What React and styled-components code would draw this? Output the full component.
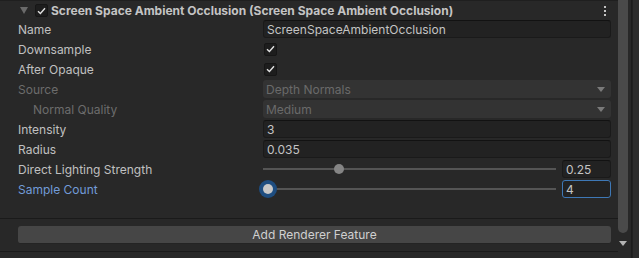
import React from 'react';
import styled, { createGlobalStyle } from 'styled-components';

const Global = createGlobalStyle`
  html, body {
    margin: 0;
    padding: 0;
    background: #282828;
    overflow: hidden;
  }
  body {
    font-family: Inter, "Noto Sans", sans-serif;
    font-size: 12px;
    color: #c4c4c4;
  }
`;

const Window = styled.div`
  display: flex;
  width: 639px;
  height: 258px;
  overflow: hidden;
`;

const Inspector = styled.div`
  width: 618px;
  display: flex;
  flex-direction: column;
  background: #282828;
  & > * {
    flex-shrink: 0;
  }
`;

const Header = styled.div`
  height: 20px;
  display: flex;
  align-items: center;
  padding-left: 20px;
  padding-right: 12px;
  border-top: 1px solid #1f1f1f;
  box-sizing: border-box;
`;

const Foldout = styled.div`
  width: 0;
  height: 0;
  border-left: 4px solid transparent;
  border-right: 4px solid transparent;
  border-top: 7px solid #6a6a6a;
  margin-right: 7px;
`;

const Title = styled.div`
  font-weight: 700;
  color: #c4c4c4;
  margin-left: 3px;
  flex: 1;
`;

const Kebab = styled.div`
  display: flex;
  flex-direction: column;
  gap: 2px;
  span {
    width: 2px;
    height: 2px;
    background: #c4c4c4;
  }
`;

const Rows = styled.div`
  display: flex;
  flex-direction: column;
  gap: 2px;
  padding: 0 7px 0 18px;
`;

const Row = styled.div`
  height: 18px;
  display: grid;
  grid-template-columns: 245px 1fr;
  align-items: center;
`;

const Label = styled.div`
  padding-left: ${p => (p.indent ? 15 : 0)}px;
  color: ${p => (p.disabled ? '#6c6c6c' : p.focused ? '#729bd8' : '#c0c0c0')};
  white-space: nowrap;
`;

const Field = styled.div`
  height: 18px;
  box-sizing: border-box;
  background: #222222;
  border: 1px solid ${p => (p.focused ? '#3e78b6' : '#1a1a1a')};
  border-top-color: ${p => (p.focused ? '#3e78b6' : '#121212')};
  border-radius: 3px;
  padding-left: 3px;
  display: flex;
  align-items: center;
  color: #c4c4c4;
`;

const Dropdown = styled.div`
  height: 18px;
  box-sizing: border-box;
  background: #333333;
  border-radius: 3px;
  padding: 0 6px 0 3px;
  display: flex;
  align-items: center;
  justify-content: space-between;
  color: #6a6a6a;
`;

const Arrow = styled.div`
  width: 0;
  height: 0;
  border-left: 4px solid transparent;
  border-right: 4px solid transparent;
  border-top: 5px solid #7a7a7a;
`;

const Check = styled.div`
  width: 13px;
  height: 13px;
  box-sizing: border-box;
  background: #1d1d1d;
  border: 1px solid #161616;
  border-radius: 2px;
  display: flex;
  align-items: center;
  justify-content: center;
  margin-left: ${p => p.offset || 0}px;
`;

const Slider = styled.div`
  display: grid;
  grid-template-columns: 1fr 49px;
  gap: 6px;
  align-items: center;
`;

const Track = styled.div`
  position: relative;
  height: 18px;
  display: flex;
  align-items: center;
  &::before {
    content: '';
    flex: 1;
    height: 2px;
    background: #555555;
  }
`;

const Thumb = styled.div`
  position: absolute;
  top: 50%;
  width: 10px;
  height: 10px;
  border-radius: 50%;
  background: ${p => (p.active ? '#c8c8c8' : '#858585')};
  transform: translate(-50%, -50%);
  box-shadow: ${p => (p.active ? '0 0 0 4px #1e4d80' : 'none')};
`;

const Footer = styled.div`
  margin-top: 20px;
  border-top: 1px solid #1a1a1a;
  border-bottom: 1px solid #1a1a1a;
  padding: 7px 7px 7px 18px;
`;

const Button = styled.div`
  height: 17px;
  background: #464646;
  border-radius: 3px;
  border-bottom: 1px solid #242424;
  display: flex;
  align-items: center;
  justify-content: center;
  color: #d0d0d0;
`;

const Below = styled.div`
  padding: 4px 0 0 8px;
  color: #9a9a9a;
`;

const ScrollTrack = styled.div`
  width: 13px;
  background: #282828;
  display: flex;
  flex-direction: column;
  align-items: flex-start;
  border-right: 1px solid #1c1c1c;
`;

const ScrollThumb = styled.div`
  width: 10px;
  height: 233px;
  flex-shrink: 0;
  background: #4a4a4a;
  border-radius: 0 0 5px 5px;
`;

const ScrollArrow = styled.div`
  margin: 8px 0 0 1px;
  width: 0;
  height: 0;
  border-left: 4px solid transparent;
  border-right: 4px solid transparent;
  border-top: 5px solid #b4b4b4;
`;

const Side = styled.div`
  flex: 1;
  background: #2c2c2c;
  border-left: 1px solid #202020;
`;

const Tick = () => (
  <svg width="9" height="8" viewBox="0 0 9 8">
    <path d="M1 4.2 L3.4 6.5 L8 1.2" fill="none" stroke="#e0e0e0" strokeWidth="1.4" />
  </svg>
);

export default function App() {
  return (
    <Window>
      <Global />
      <Inspector>
        <Header>
          <Foldout />
          <Check><Tick /></Check>
          <Title>Screen Space Ambient Occlusion (Screen Space Ambient Occlusion)</Title>
          <Kebab><span /><span /><span /></Kebab>
        </Header>
        <Rows>
          <Row>
            <Label>Name</Label>
            <Field>ScreenSpaceAmbientOcclusion</Field>
          </Row>
          <Row>
            <Label>Downsample</Label>
            <Check offset={1}><Tick /></Check>
          </Row>
          <Row>
            <Label>After Opaque</Label>
            <Check offset={1}><Tick /></Check>
          </Row>
          <Row>
            <Label disabled>Source</Label>
            <Dropdown>Depth Normals<Arrow /></Dropdown>
          </Row>
          <Row>
            <Label disabled indent>Normal Quality</Label>
            <Dropdown>Medium<Arrow /></Dropdown>
          </Row>
          <Row>
            <Label>Intensity</Label>
            <Field>3</Field>
          </Row>
          <Row>
            <Label>Radius</Label>
            <Field>0.035</Field>
          </Row>
          <Row>
            <Label>Direct Lighting Strength</Label>
            <Slider>
              <Track><Thumb style={{ left: '26%' }} /></Track>
              <Field>0.25</Field>
            </Slider>
          </Row>
          <Row>
            <Label focused>Sample Count</Label>
            <Slider>
              <Track><Thumb active style={{ left: '1.6%' }} /></Track>
              <Field focused>4</Field>
            </Slider>
          </Row>
        </Rows>
        <Footer>
          <Button>Add Renderer Feature</Button>
        </Footer>
        <Below>Screen Index</Below>
      </Inspector>
      <ScrollTrack>
        <ScrollThumb />
        <ScrollArrow />
      </ScrollTrack>
      <Side />
    </Window>
  );
}
